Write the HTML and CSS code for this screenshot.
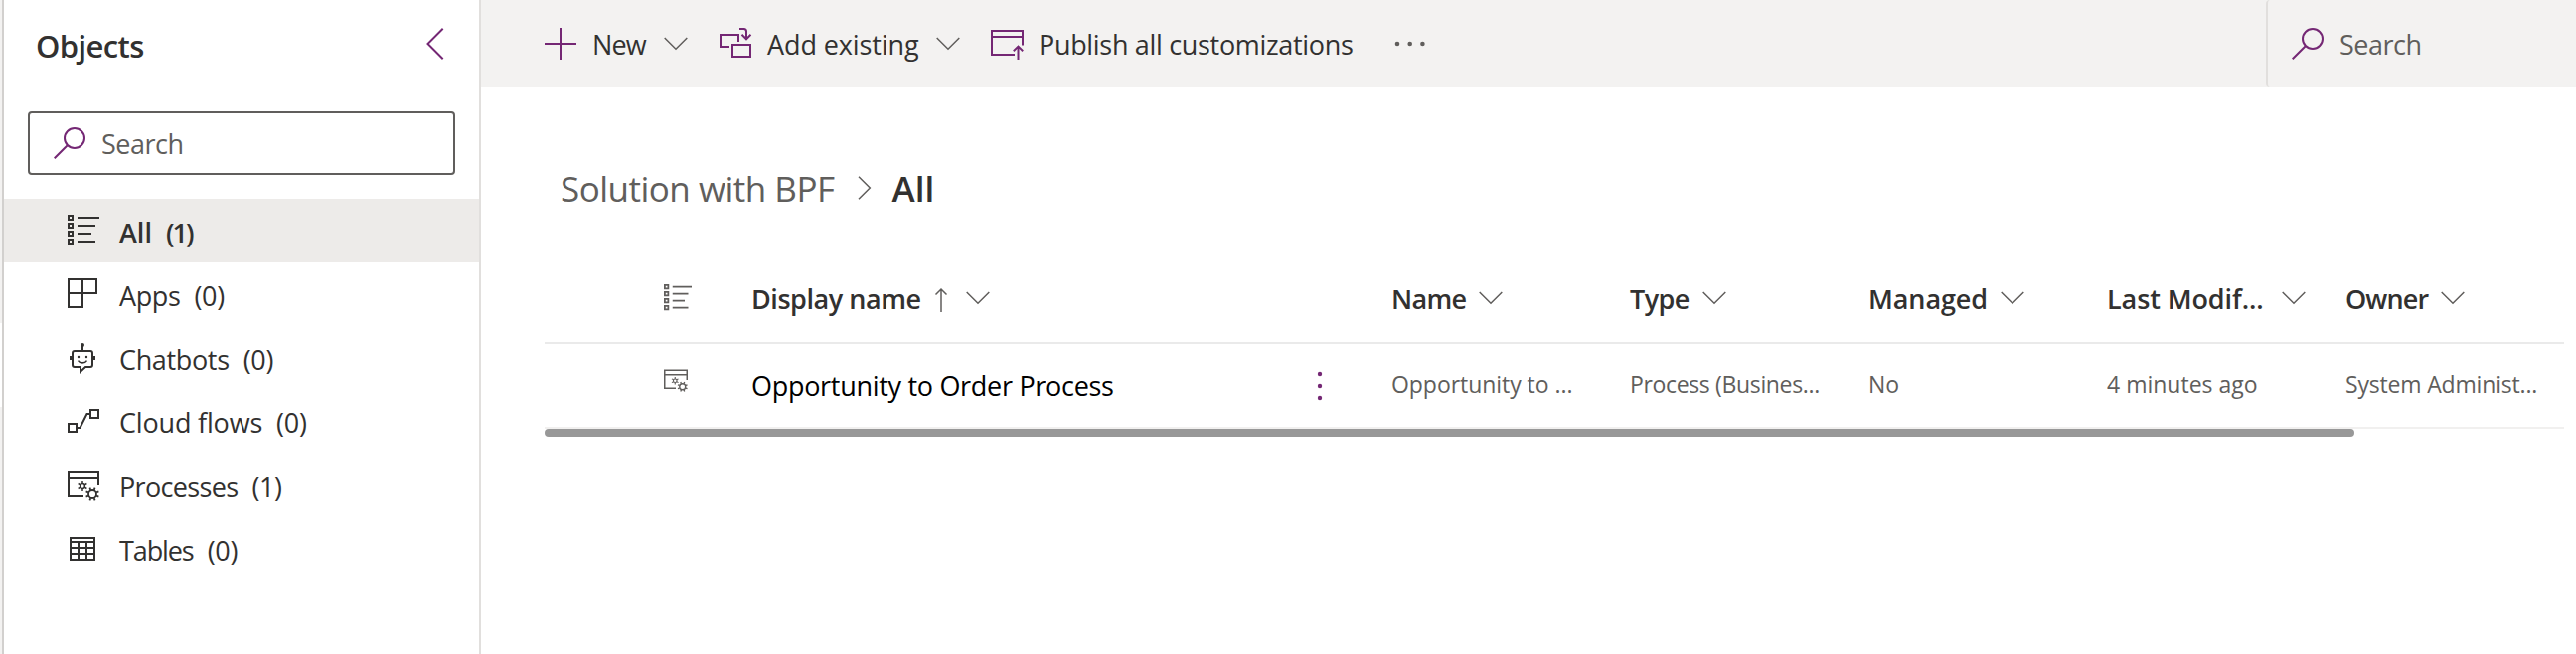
FILE: index.html
```html
<!DOCTYPE html>
<html lang="en">
<head>
<meta charset="utf-8">
<title>Solution with BPF - Objects</title>
<link rel="stylesheet" href="styles.css">
</head>
<body>
<svg class="defs" aria-hidden="true">
  <symbol id="i-search" viewBox="0 0 32 32"><circle cx="21" cy="11" r="10"/><path d="M14 18L.7 31.3"/></symbol>
  <symbol id="i-down" viewBox="0 0 24 14"><path d="M.7 1l11.3 11.3L23.3 1"/></symbol>
  <symbol id="i-list" viewBox="0 0 32 32"><path d="M1 1h4v4H1zM1 9h4v4H1zM1 17h4v4H1zM1 25h4v4H1zM10 3h22M10 11h18M10 19h14M10 27h18"/></symbol>
  <symbol id="i-process" viewBox="0 0 32 32">
    <path d="M31 16V3H1v24h15M1 9h30"/>
    <g stroke-width="1.5"><circle cx="15" cy="17" r="2.4"/><path d="M15 14.6V12M15 19.400V22M12.900 15.800l-2.300-1.300M17.100 18.200l2.300 1.300M12.900 18.200l-2.300 1.300M17.100 15.800l2.300-1.300"/></g>
    <circle cx="25" cy="25" r="4" stroke-width="1.8"/>
    <path stroke-width="1.8" d="M26.700 20.900l.9-2.300M29.100 23.300l2.300-.9M29.100 26.700l2.300.9M26.700 29.100l.9 2.300M23.300 29.100l-.9 2.300M20.900 26.700l-2.300.9M20.900 23.300l-2.300-.9M23.300 20.900l-.9-2.300"/>
  </symbol>
</svg>
<div class="app">
  <div class="rail"><div class="rail-gap"></div></div>
  <aside class="side">
    <header class="side-head">
      <h1 class="side-title">Objects</h1>
      <svg class="icon collapse" viewBox="0 0 18 32"><path d="M16.700 .7L1.500 16l15.200 15.300"/></svg>
    </header>
    <div class="side-search"><svg class="icon glyph"><use href="#i-search"/></svg><span class="t-search">Search</span></div>
    <nav class="nav">
      <a class="item active"><svg class="glyph ink"><use href="#i-list"/></svg><span class="t-all">All</span><span class="count t-c1b">(1)</span></a>
      <a class="item"><svg class="glyph ink" viewBox="0 0 32 32"><path d="M1 1h28v14H1zM1 1v28h14V1"/></svg><span class="t-apps">Apps</span><span class="count t-c0">(0)</span></a>
      <a class="item"><svg class="glyph ink" viewBox="0 0 32 32"><path d="M12 25H7a2 2 0 0 1-2-2V11a2 2 0 0 1 2-2h16a2 2 0 0 1 2 2v12a2 2 0 0 1-2 2h-5l-5 4.700V25h-1M15 9V3M3 14v4M27 14v4"/><path stroke-width="1.6" d="M10.500 18.600c2 3 7 3 9 0"/><circle class="dot" cx="15" cy="3" r="2"/><circle class="dot" cx="11" cy="15" r="1.200"/><circle class="dot" cx="19" cy="15" r="1.200"/></svg><span class="t-bots">Chatbots</span><span class="count t-c0">(0)</span></a>
      <a class="item"><svg class="glyph ink" viewBox="0 0 32 32"><path d="M1 19h8v8H1zM23 5h8v8h-8zM9 23h3.500L19.500 9H23"/></svg><span class="t-flows">Cloud flows</span><span class="count t-c0">(0)</span></a>
      <a class="item"><svg class="glyph ink"><use href="#i-process"/></svg><span class="t-proc">Processes</span><span class="count t-c1">(1)</span></a>
      <a class="item"><svg class="glyph ink" viewBox="0 0 32 32"><path d="M3 5h24v22H3zM3 9h24M3 15h24M3 21h24M11 9v18M19 9v18"/></svg><span class="t-tables">Tables</span><span class="count t-c0">(0)</span></a>
    </nav>
  </aside>
  <main class="main">
    <div class="bar">
      <div class="cmd cmd-new"><svg class="icon glyph" viewBox="0 0 32 32"><path d="M16 0v32M0 16h32"/></svg><span class="t-new">New</span><svg class="chev"><use href="#i-down"/></svg></div>
      <div class="cmd cmd-add"><svg class="icon glyph" viewBox="0 0 32 32"><path d="M19 14V7H1v12h9M13 17h18v12H13zM20 1h4.500Q27 1 27 3.500V11M22.500 6.800l4.500 4.500 4.500-4.500"/></svg><span class="t-add">Add existing</span><svg class="chev"><use href="#i-down"/></svg></div>
      <div class="cmd cmd-pub"><svg class="icon glyph-wide" viewBox="0 0 34 32"><path d="M32 17.500V3H1v24h23M1 9h31M27.500 32V19M22.800 23.300l4.700-4.700 4.700 4.700"/></svg><span class="t-pub">Publish all customizations</span></div>
      <svg class="more" viewBox="0 0 32 6"><circle cx="3" cy="3" r="2.300"/><circle cx="15.700" cy="3" r="2.300"/><circle cx="28.400" cy="3" r="2.300"/></svg>
      <div class="bar-search"><svg class="icon glyph"><use href="#i-search"/></svg><span class="t-search">Search</span></div>
    </div>
    <div class="crumbs"><span class="t-sol">Solution with BPF</span><svg class="crumb-chev" viewBox="0 0 14 24"><path d="M1 .7L12.300 12 1 23.300"/></svg><span class="here">All</span></div>
    <div class="table">
      <div class="row head">
        <div class="cell cell-icon"><svg class="list-icon"><use href="#i-list"/></svg></div>
        <div class="cell"><span class="t-display">Display name</span><svg class="sort" viewBox="0 0 12 24"><path d="M6 24V1M.5 6.500L6 1l5.500 5.500"/></svg><svg class="chev"><use href="#i-down"/></svg></div>
        <div class="cell"><span class="t-name">Name</span><svg class="chev"><use href="#i-down"/></svg></div>
        <div class="cell"><span class="t-type">Type</span><svg class="chev"><use href="#i-down"/></svg></div>
        <div class="cell"><span class="t-managed">Managed</span><svg class="chev"><use href="#i-down"/></svg></div>
        <div class="cell cell-mod"><span class="t-mod">Last Modif...</span><svg class="chev"><use href="#i-down"/></svg></div>
        <div class="cell"><span class="t-owner">Owner</span><svg class="chev"><use href="#i-down"/></svg></div>
      </div>
      <div class="row body">
        <div class="cell cell-icon"><svg class="row-icon"><use href="#i-process"/></svg></div>
        <div class="cell primary"><span class="t-row">Opportunity to Order Process</span><svg class="kebab" viewBox="0 0 6 30"><circle cx="3" cy="3" r="2.200"/><circle cx="3" cy="15" r="2.200"/><circle cx="3" cy="27" r="2.200"/></svg></div>
        <div class="cell sub s-opp">Opportunity to ...</div>
        <div class="cell sub s-proc">Process (Busines...</div>
        <div class="cell sub s-no">No</div>
        <div class="cell sub s-min">4 minutes ago</div>
        <div class="cell sub s-sys">System Administ...</div>
      </div>
      <div class="scroll"></div>
    </div>
  </main>
</div>
</body>
</html>
```
FILE: styles.css
```css
* { box-sizing: border-box; }
body { margin: 0; background: #fff; color: #323130; font: 27px/36px "Open Sans", "Noto Sans", sans-serif; white-space: nowrap; }
svg { display: block; flex: none; fill: none; stroke: currentColor; stroke-width: 2; overflow: visible; }
.defs { position: absolute; width: 0; height: 0; }
.app { display: flex; height: 658px; overflow: hidden; }

.rail { flex: none; width: 4px; background: #f3f2f1; border-right: 2px solid #d2d0ce; padding-top: 325px; }
.rail-gap { height: 84px; background: #fff; }
.icon { color: #742774; }
.glyph { width: 32px; height: 32px; }
.glyph-wide { width: 34px; height: 32px; }
.dot { fill: currentColor; stroke: none; }
.chev { width: 24px; height: 14px; color: #605e5c; stroke-width: 1.5; }

.side { flex: none; width: 480px; border-right: 2px solid #e1dfdd; }
.side-head { display: flex; align-items: center; justify-content: space-between; height: 88px; padding: 0 35px 0 32px; }
.side-title { margin: 3px 0 0; font-size: 31px; font-weight: 600; letter-spacing: -.6px; line-height: 40px; }
.collapse { width: 18px; height: 32px; }
.side-search { display: flex; align-items: center; gap: 16px; height: 64px; margin: 24px; padding-left: 24px; border: 2px solid #605e5c; border-radius: 4px; color: #605e5c; }
.side-search span, .bar span { padding-top: 2px; }
.item { display: flex; align-items: center; height: 64px; padding-left: 64px; }
.item .glyph { margin-right: 20px; }
.item span { padding-top: 3px; }
.item .count { margin-left: 14px; }
.active { background: #edebe9; font-weight: 600; }

.main { flex: 1; min-width: 0; }
.bar { display: flex; align-items: center; height: 88px; padding-left: 64px; background: #f3f2f1; }
.cmd { display: flex; align-items: center; }
.cmd-new { width: 176px; }
.cmd-new .glyph { margin-right: 16px; }
.cmd-new .chev { margin-left: 18px; }
.cmd-add { width: 273px; }
.cmd-add .glyph { margin-right: 16px; }
.cmd-add .chev { margin-left: 17px; }
.cmd-pub { width: 406px; }
.cmd-pub .glyph-wide { margin-right: 14px; }
.more { width: 32px; height: 6px; fill: #605e5c; stroke: none; }
.bar-search { display: flex; align-items: center; gap: 16px; width: 312px; height: 88px; margin-left: auto; padding-left: 24px; border-left: 2px solid #e1dfdd; border-radius: 4px 0 0 4px; color: #605e5c; }

.crumbs { display: flex; align-items: center; height: 48px; margin: 78px 0 0 80px; font-size: 35px; line-height: 48px; color: #605e5c; }
.crumb-chev { width: 14px; height: 24px; margin: 0 21px 2px 23px; stroke-width: 1.5; }
.here { font-weight: 600; color: #323130; }

.table { width: 2032px; margin: 42px 0 0 64px; }
.row { display: grid; grid-template-columns: 208px 644px 240px 240px 240px 240px 220px; }
.head { height: 90px; border-bottom: 2px solid #eaeaea; font-weight: 600; }
.head span { padding-top: 2px; }
.body { height: 86px; border-bottom: 2px solid #f1f0ef; }
.cell { display: flex; align-items: center; }
.cell-icon { padding-left: 120px; color: #605e5c; }
.list-icon { width: 28px; height: 28px; }
.row-icon { width: 24px; height: 24px; margin-bottom: 12px; }
.head .chev { margin-left: 13px; }
.head .cell-mod .chev { margin-left: 18px; }
.head .sort { width: 12px; height: 24px; margin: 4px 6px 0 14px; color: #605e5c; stroke-width: 1.5; }
.head .sort + .chev { margin-left: 13px; }
.primary { color: #000; }
.kebab { width: 6px; height: 30px; margin-left: auto; margin-right: 69px; fill: #742774; stroke: none; }
.sub { padding-bottom: 5px; font-size: 23px; color: #605e5c; }
.scroll { width: 1821px; height: 8px; border-radius: 4px; background: #989898; }

/* Optical tracking per label */
.t-search { letter-spacing: -.48px; }
.t-c1b { letter-spacing: -2px; }
.t-c0 { letter-spacing: -.3px; }
.t-c1 { letter-spacing: -.5px; }
.t-apps { letter-spacing: -.4px; }
.t-bots { letter-spacing: -.35px; }
.t-flows { letter-spacing: -.18px; }
.t-proc { letter-spacing: -.65px; }
.t-tables { letter-spacing: -1.1px; }
.t-new { letter-spacing: -.9px; }
.t-add { letter-spacing: -.1px; }
.t-pub { letter-spacing: -.32px; }
.t-sol { letter-spacing: -.51px; }
.t-display { letter-spacing: -.45px; }
.t-name { letter-spacing: -.7px; }
.t-type { letter-spacing: -.6px; }
.t-managed { letter-spacing: -.1px; }
.t-mod { letter-spacing: -.1px; }
.t-owner { letter-spacing: -.9px; }
.t-row { letter-spacing: -.3px; }
.s-opp { letter-spacing: -.05px; }
.s-proc { letter-spacing: -.35px; }
.s-sys { letter-spacing: -.18px; }
```
